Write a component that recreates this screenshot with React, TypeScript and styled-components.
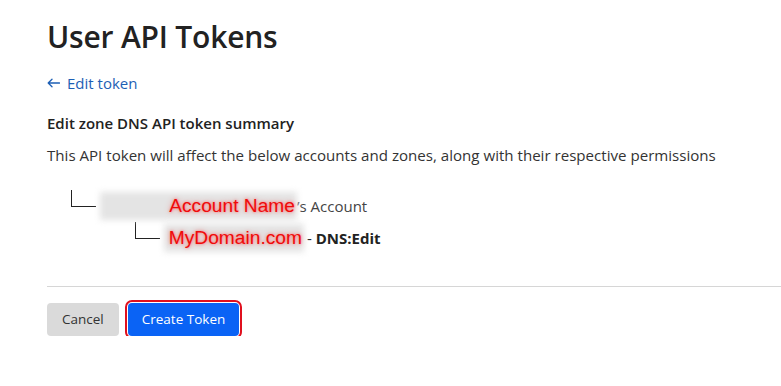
import styled, { createGlobalStyle } from "styled-components";

const GlobalStyle = createGlobalStyle`
  html, body {
    margin: 0;
    padding: 0;
    background: #ffffff;
  }
  body {
    font-family: "Open Sans", "Noto Sans", sans-serif;
    color: #333333;
  }
`;

const Page = styled.main`
  display: flex;
  flex-direction: column;
  padding: 19px 0 0 47px;
`;

const Title = styled.h1`
  margin: 0;
  font-size: 30px;
  line-height: 36px;
  font-weight: 600;
  color: #222222;
  letter-spacing: -0.2px;
`;

const BackLink = styled.a`
  margin-top: 18px;
  display: flex;
  align-items: center;
  gap: 7px;
  font-size: 15px;
  line-height: 20px;
  color: #1d5fb5;
  text-decoration: none;
  cursor: pointer;
`;

const Heading = styled.h2`
  margin: 20px 0 0;
  font-size: 15px;
  line-height: 20px;
  font-weight: 600;
  color: #222222;
`;

const Description = styled.p`
  margin: 12px 0 0;
  font-size: 15.1px;
  line-height: 20px;
  color: #333333;
`;

const Tree = styled.div`
  margin-top: 25px;
  display: flex;
  flex-direction: column;
`;

const TreeRow = styled.div<{ $depth: number }>`
  display: flex;
  align-items: center;
  height: 32px;
  padding-left: ${({ $depth }) => 24 + $depth * 64}px;
  font-size: 15px;
  color: #444444;
`;

const Connector = styled.span`
  width: 24px;
  height: 16px;
  margin-top: -16px;
  border-left: 1.5px solid #222222;
  border-bottom: 1.5px solid #222222;
  margin-right: 4px;
  flex-shrink: 0;
`;

const Redacted = styled.span<{ $width: number }>`
  position: relative;
  display: inline-flex;
  justify-content: flex-end;
  align-items: center;
  width: ${({ $width }) => $width}px;
  height: 32px;

  &::before {
    content: "";
    position: absolute;
    inset: 2px 0;
    background: #e4e4e4;
    filter: blur(3px);
  }
`;

const RedLabel = styled.span`
  position: relative;
  font-family: "Liberation Sans", Arial, sans-serif;
  font-size: 19.2px;
  color: #f00a0a;
  text-shadow: 0 0 3px rgba(255, 0, 0, 0.5), 0 0 7px rgba(255, 0, 0, 0.3);
  padding-right: 2px;
`;

const Permission = styled.span`
  margin-left: 3px;
  color: #222222;
  strong {
    font-weight: 700;
  }
`;

const Divider = styled.hr`
  margin: 32px 0 0;
  border: none;
  border-top: 1px solid #d6d6d6;
`;

const Actions = styled.div`
  display: flex;
  gap: 8px;
  margin-top: 16px;
`;

const Button = styled.button<{ $primary?: boolean }>`
  height: 33px;
  padding: 0 15px 1px;
  border: none;
  border-radius: 4px;
  font-family: "Open Sans", "Noto Sans", sans-serif;
  font-size: 13.5px;
  cursor: pointer;
  background: ${({ $primary }) => ($primary ? "#0a63f5" : "#dadada")};
  color: ${({ $primary }) => ($primary ? "#ffffff" : "#333333")};
  outline: ${({ $primary }) => ($primary ? "2px solid #e0101e" : "none")};
  outline-offset: 1px;
  ${({ $primary }) => ($primary ? "padding: 0 14px 1px; margin-left: 1px;" : "")}
`;

const ArrowIcon = () => (
  <svg width="13" height="10" viewBox="0 0 13 10" fill="none">
    <path
      d="M12.5 5H1.2M5 1.2L1.2 5L5 8.8"
      stroke="#1d5fb5"
      strokeWidth="1.3"
      strokeLinecap="round"
      strokeLinejoin="round"
    />
  </svg>
);

export default function App() {
  return (
    <>
      <GlobalStyle />
      <Page>
        <Title>User API Tokens</Title>
        <BackLink>
          <ArrowIcon />
          <span>Edit token</span>
        </BackLink>
        <Heading>Edit zone DNS API token summary</Heading>
        <Description>
          This API token will affect the below accounts and zones, along with
          their respective permissions
        </Description>
        <Tree>
          <TreeRow $depth={0}>
            <Connector />
            <Redacted $width={197}>
              <RedLabel>Account Name</RedLabel>
            </Redacted>
            <span>’s Account</span>
          </TreeRow>
          <TreeRow $depth={1}>
            <Connector />
            <Redacted $width={140}>
              <RedLabel>MyDomain.com</RedLabel>
            </Redacted>
            <Permission>
              - <strong>DNS:Edit</strong>
            </Permission>
          </TreeRow>
        </Tree>
        <Divider />
        <Actions>
          <Button>Cancel</Button>
          <Button $primary>Create Token</Button>
        </Actions>
      </Page>
    </>
  );
}
